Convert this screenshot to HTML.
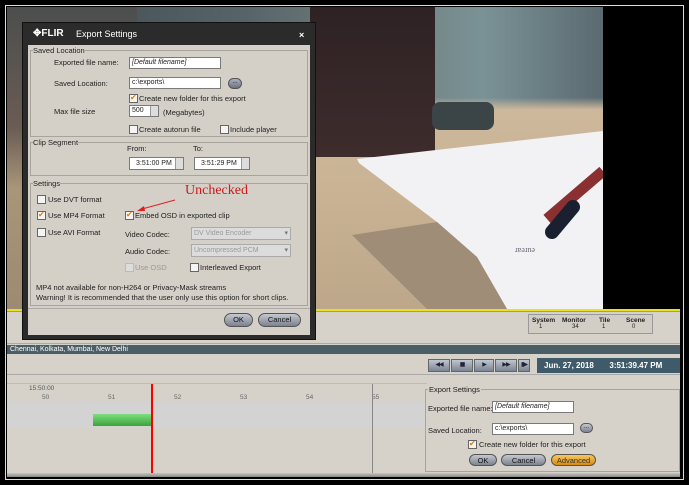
<!DOCTYPE html>
<html><head><meta charset="utf-8"><style>
*{margin:0;padding:0;box-sizing:border-box}
body{width:689px;height:485px;background:#000;position:relative;overflow:hidden;font-family:"Liberation Sans",sans-serif;font-size:7.5px;color:#222}
.a{position:absolute}
.t{position:absolute;white-space:nowrap;font-size:7.5px;line-height:9px}
.in{position:absolute;background:#fff;border:1px solid #7a7a7a;font-size:7px;line-height:10px;padding-left:2px;white-space:nowrap}
.cb{position:absolute;width:9px;height:9px;background:#f4f4f4;border:1px solid #666}
.cb.on::after{content:"✔";position:absolute;left:0px;top:-2px;font-size:8px;color:#e07a10}
.btn{position:absolute;border-radius:7px;background:linear-gradient(#c4c8d0,#7c8290);border:1px solid #555;text-align:center;font-size:7.5px;line-height:11px;color:#111}
.grp{position:absolute;border:1px solid #a8a49c}
.spin{position:absolute;width:8px;border-left:1px solid #999;background:#ddd;top:0;bottom:0;right:0}
.sel{position:absolute;background:#dcdcdc;border:1px solid #aaa;color:#999;font-size:7px;line-height:11px;padding-left:2px}
.sel::after{content:"▾";position:absolute;right:2px;top:0;color:#777}
.mb{position:absolute;top:352px;height:13px;background:linear-gradient(#c0c6d0,#7a8494);border:1px solid #666;color:#223;font-size:6px;line-height:11px;text-align:center;letter-spacing:-1px}
</style></head><body>
<div class="a" style="left:5px;top:5px;width:679px;height:475px;border:1px solid #ddd"></div>
<div class="a" style="left:7px;top:7px;width:673px;height:470px;background:#d6d2ca;overflow:hidden">
 <!-- video -->
 <div class="a" style="left:0;top:0;width:596px;height:302px;background:linear-gradient(90deg,#3c4a4c 0%,#56646a 40%,#707c7a 60%,#7a9296 80%,#5a6a70 100%)"></div>
 <div class="a" style="left:0;top:0;width:596px;height:302px;background:linear-gradient(180deg,rgba(0,0,0,0) 30%,#cdb89c 34%,#c9b394 60%,#bda78a)"></div>
 <div class="a" style="left:303px;top:0;width:125px;height:150px;background:linear-gradient(180deg,#2e2224,#3e2c2c)"></div>
 <div class="a" style="left:425px;top:95px;width:62px;height:28px;background:#3b4446;border-radius:8px"></div>
 <div class="a" style="left:0;top:0;width:130px;height:302px;background:linear-gradient(180deg,#4c4e4e,#6a5c54 40%,#a89678 60%,#9c8a72)"></div>
 <svg class="a" style="left:0;top:0" width="596" height="302">
  <polygon points="350,152 596,124 596,302 500,302 470,250 430,215 352,156" fill="#f2f2f4"/>
  <polygon points="345,228 430,215 470,250 500,302 420,302" fill="#a08d78"/>
  <line x1="540" y1="212" x2="596" y2="164" stroke="#8a3030" stroke-width="11"/>
  <line x1="545" y1="225" x2="566" y2="200" stroke="#1a2030" stroke-width="14" stroke-linecap="round"/>
  <text x="508" y="245" font-size="8" fill="#667" font-family="Liberation Serif">ɹɐǝɹnǝ</text>
 </svg>
 <div class="a" style="left:596px;top:0;width:77px;height:302px;background:#000"></div>
 <div class="a" style="left:0;top:302px;width:673px;height:2px;background:#e8e020"></div>
 <div class="a" style="left:0;top:304px;width:673px;height:1px;background:#999"></div>
 <!-- status boxes -->
 <div class="a" style="left:521px;top:307px;width:125px;height:20px;border:1px solid #999;background:#d2cec6"></div>
 <div class="t" style="left:525px;top:309px;font-weight:bold;font-size:6.5px">System</div><div class="t" style="left:532px;top:316px;font-size:6px">1</div>
 <div class="t" style="left:555px;top:309px;font-weight:bold;font-size:6.5px">Monitor</div><div class="t" style="left:565px;top:316px;font-size:6px">34</div>
 <div class="t" style="left:592px;top:309px;font-weight:bold;font-size:6.5px">Tile</div><div class="t" style="left:595px;top:316px;font-size:6px">1</div>
 <div class="t" style="left:619px;top:309px;font-weight:bold;font-size:6.5px">Scene</div><div class="t" style="left:625px;top:316px;font-size:6px">0</div>
 <div class="a" style="left:0;top:336px;width:673px;height:1px;background:#aaa"></div>
 <div class="a" style="left:0;top:338px;width:673px;height:9px;background:#4a5e68"></div>
 <div class="t" style="left:3px;top:338px;color:#fff;font-size:7px">Chennai, Kolkata, Mumbai, New Delhi</div>
 <!-- controls -->
 <div class="mb" style="left:421px;width:22px">◀◀</div>
 <div class="mb" style="left:444px;width:22px">▮▮</div>
 <div class="mb" style="left:467px;width:20px">▶</div>
 <div class="mb" style="left:488px;width:22px">▶▶</div>
 <div class="mb" style="left:511px;width:12px">▮▶</div>
 <div class="a" style="left:530px;top:351px;width:143px;height:15px;background:#3f5a68;color:#fff;font-weight:bold;font-size:8px;line-height:15px;padding-left:7px;white-space:pre">Jun. 27, 2018       3:51:39.47 PM</div>
 <!-- timeline -->
 <div class="a" style="left:0;top:367px;width:673px;height:1px;background:#aaa"></div>
 <div class="a" style="left:0;top:376px;width:420px;height:1px;background:#bbb"></div>
 <div class="t" style="left:22px;top:377px;color:#555;font-size:6.5px">15:50:00</div>
 <div class="t" style="left:35px;top:386px;color:#666;font-size:6.5px">50</div>
 <div class="t" style="left:101px;top:386px;color:#666;font-size:6.5px">51</div>
 <div class="t" style="left:167px;top:386px;color:#666;font-size:6.5px">52</div>
 <div class="t" style="left:233px;top:386px;color:#666;font-size:6.5px">53</div>
 <div class="t" style="left:299px;top:386px;color:#666;font-size:6.5px">54</div>
 <div class="t" style="left:365px;top:386px;color:#666;font-size:6.5px">55</div>
 <div class="a" style="left:0;top:395px;width:418px;height:26px;background:#d3d3d3"></div>
 <div class="a" style="left:86px;top:407px;width:59px;height:12px;background:linear-gradient(#7ede7e,#3aa43a)"></div>
 <div class="a" style="left:365px;top:377px;width:1px;height:89px;background:#888"></div>
 <div class="a" style="left:144px;top:377px;width:2px;height:89px;background:#f00"></div>
 <div class="a" style="left:0;top:466px;width:673px;height:4px;background:linear-gradient(#c8c4bc,#888)"></div>
 <!-- export panel -->
 <div class="grp" style="left:418px;top:382px;width:255px;height:83px"></div>
 <div class="t" style="left:421px;top:378px;background:#d6d2ca;padding:0 1px">Export Settings</div>
 <div class="t" style="left:421px;top:397px">Exported file name:</div>
 <div class="in" style="left:485px;top:394px;width:82px;height:12px;font-style:italic">[Default filename]</div>
 <div class="t" style="left:421px;top:419px">Saved Location:</div>
 <div class="in" style="left:485px;top:416px;width:82px;height:12px">c:\exports\</div>
 <div class="btn" style="left:573px;top:416px;width:13px;height:10px;border-radius:6px;font-size:6px;line-height:6px">...</div>
 <div class="cb on" style="left:461px;top:433px"></div>
 <div class="t" style="left:472px;top:433px">Create new folder for this export</div>
 <div class="btn" style="left:462px;top:447px;width:28px;height:12px">OK</div>
 <div class="btn" style="left:494px;top:447px;width:45px;height:12px">Cancel</div>
 <div class="btn" style="left:544px;top:447px;width:45px;height:12px;background:linear-gradient(#f6c860,#d88a10);color:#333">Advanced</div>
</div>
<!-- dialog -->
<div class="a" style="left:22px;top:22px;width:294px;height:318px;background:#2b2b2b;border:1px solid #111"></div>
<div class="t" style="left:33px;top:28px;color:#fff;font-weight:bold;font-size:10px;line-height:12px">✥FLIR</div>
<div class="t" style="left:76px;top:28px;color:#fff;font-size:9px;line-height:12px">Export Settings</div>
<div class="t" style="left:299px;top:31px;color:#fff;font-size:9px;font-weight:bold">×</div>
<div class="a" style="left:28px;top:45px;width:282px;height:263px;background:#d4d0c8"></div>
<div class="a" style="left:28px;top:308px;width:282px;height:27px;background:#d4d0c8;border-top:1px solid #aaa"></div>
<div class="grp" style="left:30px;top:50px;width:278px;height:87px"></div>
<div class="t" style="left:33px;top:46px;background:#d4d0c8">Saved Location</div>
<div class="t" style="left:54px;top:58px">Exported file name:</div>
<div class="in" style="left:129px;top:57px;width:92px;height:12px;font-style:italic">[Default filename]</div>
<div class="t" style="left:54px;top:79px">Saved Location:</div>
<div class="in" style="left:129px;top:77px;width:92px;height:12px">c:\exports\</div>
<div class="btn" style="left:228px;top:78px;width:14px;height:11px;font-size:6px;line-height:6px;background:linear-gradient(#aab0bc,#6c7280)">...</div>
<div class="cb on" style="left:129px;top:94px"></div>
<div class="t" style="left:139px;top:94px">Create new folder for this export</div>
<div class="t" style="left:54px;top:107px">Max file size</div>
<div class="in" style="left:129px;top:105px;width:30px;height:12px">500<div class="spin"></div></div>
<div class="t" style="left:163px;top:108px">(Megabytes)</div>
<div class="cb" style="left:129px;top:125px"></div>
<div class="t" style="left:139px;top:125px">Create autorun file</div>
<div class="cb" style="left:220px;top:125px"></div>
<div class="t" style="left:230px;top:125px">Include player</div>
<div class="grp" style="left:30px;top:142px;width:278px;height:34px"></div>
<div class="t" style="left:33px;top:138px;background:#d4d0c8">Clip Segment</div>
<div class="t" style="left:127px;top:144px">From:</div>
<div class="t" style="left:193px;top:144px">To:</div>
<div class="in" style="left:129px;top:157px;width:55px;height:13px;padding-left:6px;line-height:11px">3:51:00 PM<div class="spin"></div></div>
<div class="in" style="left:194px;top:157px;width:56px;height:13px;padding-left:6px;line-height:11px">3:51:29 PM<div class="spin"></div></div>
<div class="grp" style="left:30px;top:183px;width:278px;height:123px"></div>
<div class="t" style="left:33px;top:179px;background:#d4d0c8">Settings</div>
<div class="cb" style="left:37px;top:195px"></div><div class="t" style="left:48px;top:195px">Use DVT format</div>
<div class="cb on" style="left:37px;top:211px"></div><div class="t" style="left:48px;top:211px">Use MP4 Format</div>
<div class="cb" style="left:37px;top:228px"></div><div class="t" style="left:48px;top:228px">Use AVI Format</div>
<div class="cb on" style="left:125px;top:211px"></div><div class="t" style="left:135px;top:211px">Embed OSD in exported clip</div>
<div class="t" style="left:125px;top:230px">Video Codec:</div>
<div class="sel" style="left:191px;top:227px;width:100px;height:13px">DV Video Encoder</div>
<div class="t" style="left:125px;top:247px">Audio Codec:</div>
<div class="sel" style="left:191px;top:244px;width:100px;height:13px">Uncompressed PCM</div>
<div class="cb" style="left:125px;top:263px;border-color:#bbb;background:#ddd"></div><div class="t" style="left:135px;top:263px;color:#999">Use OSD</div>
<div class="cb" style="left:190px;top:263px"></div><div class="t" style="left:200px;top:263px">Interleaved Export</div>
<div class="t" style="left:36px;top:283px">MP4 not available for non-H264 or Privacy-Mask streams</div>
<div class="t" style="left:36px;top:293px">Warning! It is recommended that the user only use this option for short clips.</div>
<div class="btn" style="left:224px;top:313px;width:29px;height:14px;line-height:12px">OK</div>
<div class="btn" style="left:258px;top:313px;width:43px;height:14px;line-height:12px">Cancel</div>
<div class="t" style="left:185px;top:183px;color:#d01818;font-family:'Liberation Serif',serif;font-size:14px;line-height:16px">Unchecked</div>
<svg class="a" style="left:0;top:0" width="689" height="485"><line x1="175" y1="200" x2="142" y2="209" stroke="#e02020" stroke-width="1"/><polygon points="137,211 144,206 145,211" fill="#e02020"/></svg>
</body></html>
